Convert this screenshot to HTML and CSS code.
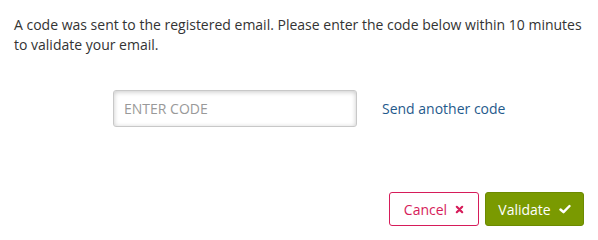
FILE: index.html
```html
<!DOCTYPE html>
<html>
<head>
<meta charset="utf-8">
<link rel="stylesheet" href="styles.css">
</head>
<body>
<div class="panel">
  <p class="intro">A code was sent to the registered email. Please enter the code below within 10 minutes to validate your email.</p>
  <div class="code-row">
    <input class="code-input" type="text" placeholder="ENTER CODE">
    <a class="resend" href="#">Send another code</a>
  </div>
  <div class="actions">
    <button class="btn btn-cancel">Cancel <svg class="ico" width="9" height="9" viewBox="0 0 10 10"><path d="M2 2 L8 8 M8 2 L2 8" stroke="currentColor" stroke-width="2.4" stroke-linecap="round"/></svg></button>
    <button class="btn btn-validate">Validate <svg class="ico" width="12" height="10" viewBox="0 0 12 10"><path d="M1.5 5.5 L4.5 8.2 L10.5 2" fill="none" stroke="currentColor" stroke-width="2.4" stroke-linecap="round" stroke-linejoin="round"/></svg></button>
  </div>
</div>
</body>
</html>
```
FILE: styles.css
```css
html, body { margin: 0; padding: 0; background: #fff; }
body { font-family: "Open Sans", sans-serif; color: #333; font-size: 14px; }
.panel { padding: 15px 14px 0 14px; }
.intro { margin: 0; line-height: 20px; }
.code-row { display: flex; align-items: center; margin-top: 35px; padding-left: 99px; }
.code-input {
  width: 244px; height: 37px; box-sizing: border-box;
  border: 1px solid #c8c8c8; border-radius: 3px;
  box-shadow: inset 0 1px 5px rgba(0,0,0,0.22);
  padding: 0 10px; font-family: "Open Sans", sans-serif; font-size: 14px; color: #333;
  outline: none;
}
.code-input::placeholder { color: #999; }
.resend { margin-left: 25px; color: #1f5a8c; text-decoration: none; }
.actions { display: flex; justify-content: flex-end; gap: 6px; margin-top: 65px; }
.btn {
  height: 34px; box-sizing: border-box; border-radius: 3px;
  font-family: "Open Sans", sans-serif; font-size: 14px;
  display: flex; align-items: center; justify-content: center; gap: 8px; cursor: pointer;
}
.btn-cancel { width: 90px; background: #fff; border: 1px solid #d61c5a; color: #d61c5a; }
.btn-validate { width: 99px; background: #7a9a01; border: 1px solid #6c8a00; color: #fff; }
.ico { display: block; }
```
